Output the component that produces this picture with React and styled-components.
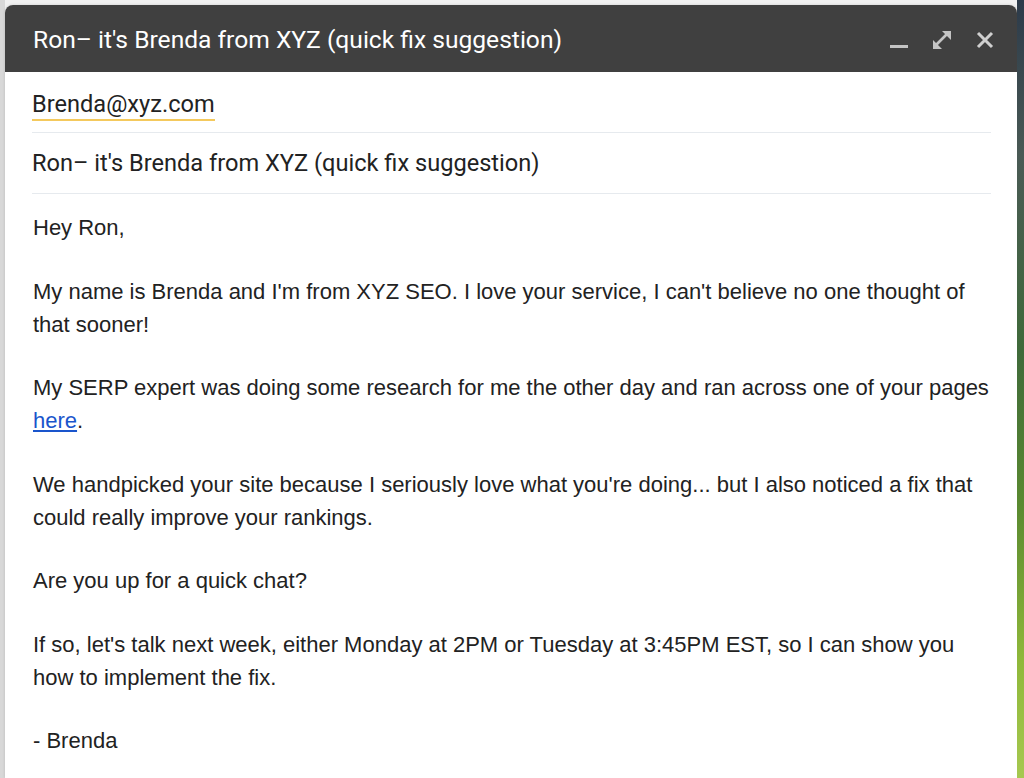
import styled, { createGlobalStyle } from "styled-components";

const GlobalStyle = createGlobalStyle`
  html, body {
    margin: 0;
    padding: 0;
    width: 1024px;
    height: 778px;
    overflow: hidden;
  }
  body {
    background: #f1f1f1;
    font-family: Roboto, "Liberation Sans", Arial, sans-serif;
  }
`;

const Screen = styled.div`
  display: flex;
  width: 1024px;
  height: 778px;
  padding-top: 5px;
  box-sizing: border-box;
  background: linear-gradient(to right, #d8d8d8 0, #d8d8d8 5px, #f1f1f1 5px);
`;

const Backdrop = styled.div`
  flex: 1;
  margin-top: -5px;
  background: linear-gradient(
    to bottom,
    #2c3a4a 0%,
    #4a5a55 20%,
    #3f6a3a 45%,
    #5a8a30 65%,
    #8fb83a 85%,
    #a6c850 100%
  );
`;

const Window = styled.div`
  margin-left: 5px;
  width: 1012px;
  display: flex;
  flex-direction: column;
  background: #fff;
  border-radius: 8px 8px 0 0;
  overflow: hidden;
  box-shadow: 0 0 3px rgba(0, 0, 0, 0.15);
`;

const TitleBar = styled.div`
  height: 67px;
  flex-shrink: 0;
  display: flex;
  align-items: center;
  justify-content: space-between;
  padding: 2px 21px 0 28px;
  box-sizing: border-box;
  background: #404040;
`;

const Title = styled.div`
  color: #fff;
  font-size: 24.6px;
`;

const Controls = styled.div`
  display: flex;
  align-items: center;
  gap: 21px;
`;

const IconButton = styled.span`
  display: flex;
  width: 22px;
  height: 22px;
  align-items: center;
  justify-content: center;
`;

const Fields = styled.div`
  padding: 0 26px 0 27px;
`;

const Field = styled.div`
  height: 60px;
  display: flex;
  align-items: center;
  border-bottom: 1px solid #e6eaee;
  font-size: 23.6px;
  color: #222;
`;

const Recipient = styled.span`
  border-bottom: 2px solid #f4c95d;
  line-height: 28px;
  padding-bottom: 1px;
  margin-top: 6px;
`;

const Body = styled.div`
  padding: 17px 28px 0 28px;
  font-family: "Liberation Sans", Arial, sans-serif;
  font-size: 22px;
  line-height: 33px;
  color: #222;
`;

const Para = styled.p`
  margin: 0 0 30.5px 0;
`;

const Link = styled.a`
  color: #1a55cc;
  text-decoration: underline;
`;

export default function App() {
  return (
    <>
      <GlobalStyle />
      <Screen>
        <Window>
          <TitleBar>
            <Title>Ron– it's Brenda from XYZ (quick fix suggestion)</Title>
            <Controls>
              <IconButton>
                <svg width="20" height="20" viewBox="0 0 20 20">
                  <rect x="1" y="15" width="18" height="3" fill="#c4c4c4" />
                </svg>
              </IconButton>
              <IconButton>
                <svg width="20" height="20" viewBox="0 0 20 20" fill="#c4c4c4">
                  <path d="M4 15 L16 3" stroke="#c4c4c4" strokeWidth="2.6" />
                  <path d="M10 1 H19 V10 Z" />
                  <path d="M1 10 V19 H10 Z" />
                </svg>
              </IconButton>
              <IconButton>
                <svg width="18" height="18" viewBox="0 0 18 18">
                  <path
                    d="M2 2 L16 16 M16 2 L2 16"
                    stroke="#d0d0d0"
                    strokeWidth="3"
                  />
                </svg>
              </IconButton>
            </Controls>
          </TitleBar>
          <Fields>
            <Field>
              <Recipient>Brenda@xyz.com</Recipient>
            </Field>
            <Field>Ron– it's Brenda from XYZ (quick fix suggestion)</Field>
          </Fields>
          <Body>
            <Para>Hey Ron,</Para>
            <Para>
              My name is Brenda and I'm from XYZ SEO. I love your service, I
              can't believe no one thought of that sooner!
            </Para>
            <Para>
              My SERP expert was doing some research for me the other day and
              ran across one of your pages <Link href="#">here</Link>.
            </Para>
            <Para>
              We handpicked your site because I seriously love what you're
              doing... but I also noticed a fix that could really improve your
              rankings.
            </Para>
            <Para>Are you up for a quick chat?</Para>
            <Para>
              If so, let's talk next week, either Monday at 2PM or Tuesday at
              3:45PM EST, so I can show you how to implement the fix.
            </Para>
            <Para>- Brenda</Para>
          </Body>
        </Window>
        <Backdrop />
      </Screen>
    </>
  );
}
